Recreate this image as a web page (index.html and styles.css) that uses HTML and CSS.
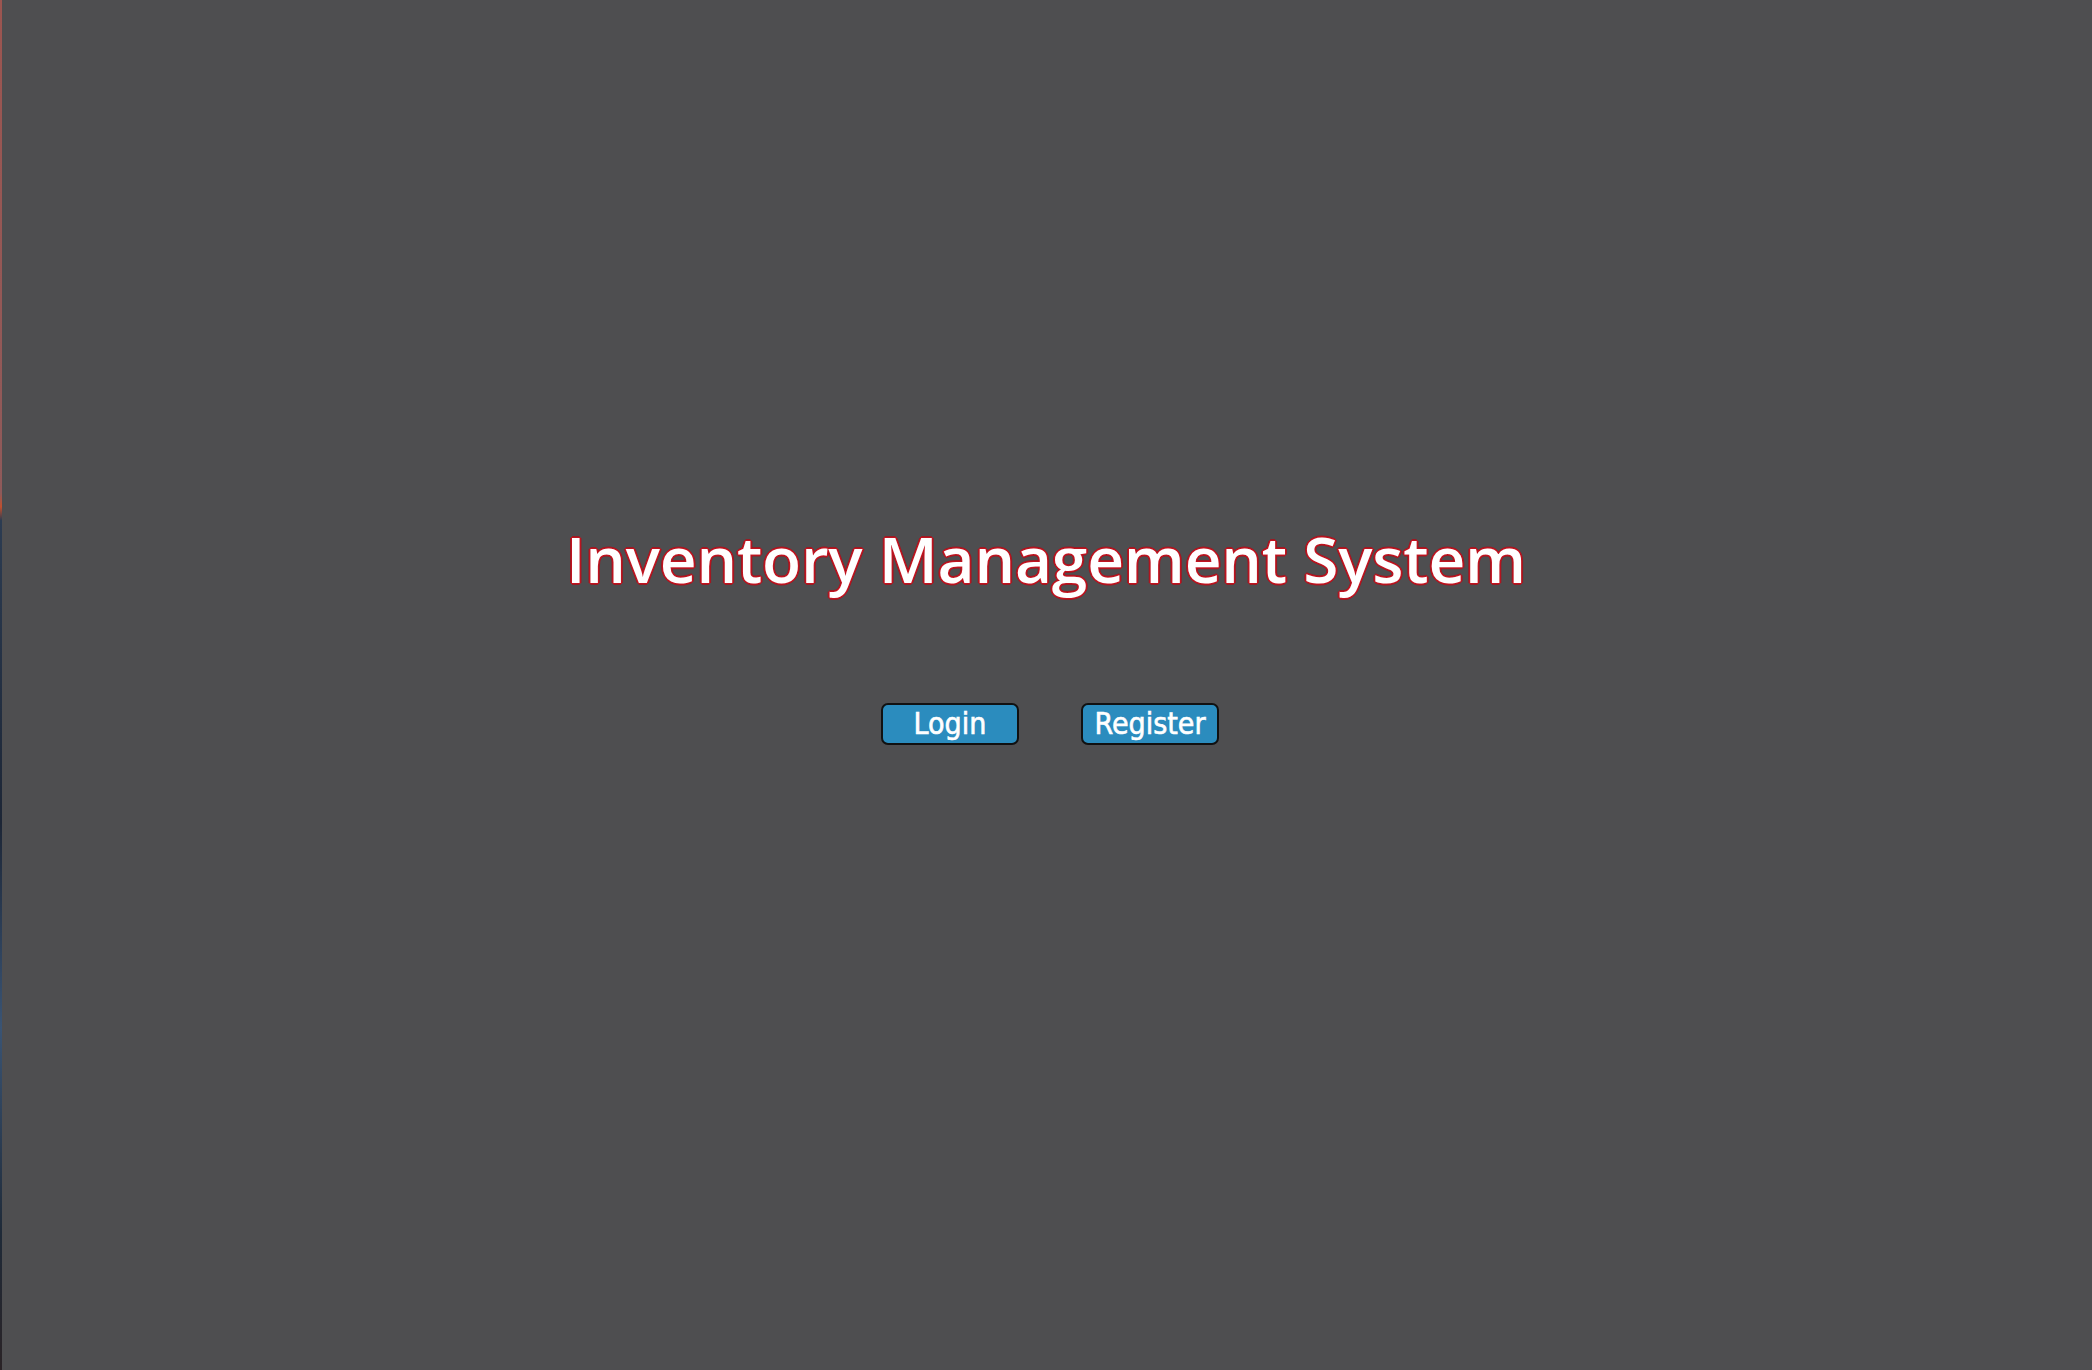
FILE: index.html
```html
<!DOCTYPE html>
<html>

<head>
  <link rel="stylesheet" href="styles.css">
  <title>Inventory Management System</title>
</head>

<body>
  <div class="hero">
    <h1 class="title">Inventory Management System</h1>
    <div class="actions">
      <button type="button" class="btn">Login</button>
      <button type="button" class="btn">Register</button>
    </div>
  </div>
</body>

</html>
```
FILE: styles.css
```css
html,
body {
  margin: 0;
  height: 100%;
}

body {
  font-family: "Open Sans", sans-serif;
  /* thin strip of the wallpaper peeking out on the left */
  background:
    linear-gradient(to bottom, #9c5550 0%, #8f5a5a 36%, #c0502f 37%, #2c3c52 38%, #1d2636 60%, #3a5474 75%, #1f2a38 90%, #2a2326 100%) left top / 2px 100% no-repeat,
    #4e4e50;
}

.hero {
  display: flex;
  flex-direction: column;
  align-items: center;
  padding-top: 521px;
}

.title {
  margin: 0;
  font-size: 64px;
  line-height: 1.2;
  font-weight: 600;
  letter-spacing: -0.2px;
  color: #ffffff;
  text-shadow:
    1px 0 0 #c01420, -1px 0 0 #c01420, 0 1px 0 #c01420, 0 -1px 0 #c01420,
    1px 1px 0 #c01420, -1px -1px 0 #c01420, 1px -1px 0 #c01420, -1px 1px 0 #c01420,
    2px 0 0 #9a1a22, -2px 0 0 #9a1a22, 0 2px 0 #9a1a22, 0 -2px 0 #9a1a22;
}

.actions {
  display: flex;
  gap: 62px;
  margin-top: 105px;
  padding-left: 8px;
}

.btn {
  width: 138px;
  height: 42px;
  padding: 0;
  font-family: "DejaVu Sans", sans-serif;
  font-stretch: condensed;
  font-size: 30px;
  line-height: 1;
  color: #ffffff;
  -webkit-text-stroke: 0.6px #ffffff;
  background-color: #2b8cbe;
  border: 2px solid #111111;
  border-radius: 7px;
  cursor: pointer;
}
```
